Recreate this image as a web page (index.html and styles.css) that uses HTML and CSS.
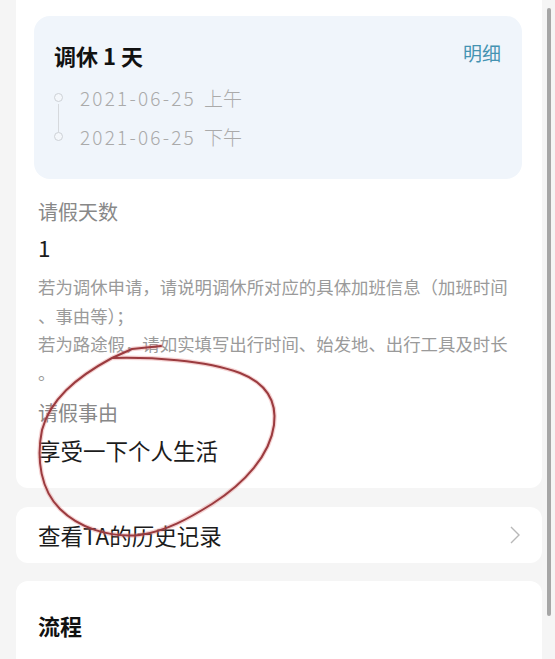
FILE: index.html
```html
<!DOCTYPE html>
<html>
<head>
  <meta charset="utf-8">
  <link rel="stylesheet" href="styles.css">
</head>
<body>
  <div class="card detail-card">
    <div class="leave-summary">
      <div class="summary-head">
        <h1>调休 1 天</h1>
        <a class="summary-link">明细</a>
      </div>
      <ul class="timeline">
        <li class="timeline-item"><span class="timeline-dot"></span><span class="timeline-date">2021-06-25</span>上午</li>
        <li class="timeline-item"><span class="timeline-dot"></span><span class="timeline-date">2021-06-25</span>下午</li>
      </ul>
    </div>

    <div class="field">
      <div class="field-label">请假天数</div>
      <div class="field-value">1</div>
      <p class="field-hint">若为调休申请，请说明调休所对应的具体加班信息（加班时间<br>、事由等）；<br>若为路途假，请如实填写出行时间、始发地、出行工具及时长<br>。</p>
    </div>

    <div class="field field-reason">
      <div class="field-label">请假事由</div>
      <div class="field-value">享受一下个人生活</div>
    </div>
  </div>

  <div class="card link-card">
    <span>查看TA的历史记录</span>
    <svg class="chevron" width="12" height="20" viewBox="0 0 12 20">
      <path d="M2 2 L10 10 L2 18" fill="none" stroke="#b8b8b8" stroke-width="1.4"/>
    </svg>
  </div>

  <div class="card flow-card">
    <h2>流程</h2>
  </div>

  <div class="scroll-thumb"></div>

  <!-- pen mark drawn over the reason field -->
  <svg class="pen-mark" width="555" height="659" viewBox="0 0 555 659">
    <g fill="none" stroke-linecap="round" stroke-linejoin="round">
      <path class="pen-glow" d="M161 346 L132 349 L112 358 C150 357 205 360 240 373 C268 384 277 402 274 425 C270 455 245 483 212 504 C188 519 166 531 140 535 C108 538 78 527 60 509 C41 490 36 460 42 430 C50 400 75 378 112 358"/>
      <path class="pen-line" d="M161 346 L132 349 L112 358 C150 357 205 360 240 373 C268 384 277 402 274 425 C270 455 245 483 212 504 C188 519 166 531 140 535 C108 538 78 527 60 509 C41 490 36 460 42 430 C50 400 75 378 112 358"/>
    </g>
  </svg>
</body>
</html>
```

FILE: styles.css
```css
body {
  margin: 0;
  padding: 0 13px 0 16px;
  background: #f5f5f5;
  font-family: "Noto Sans CJK SC", "Noto Sans", sans-serif;
  color: #222;
  overflow: hidden;
}
.card {
  background: #fff;
  border-radius: 12px;
}
.detail-card {
  border-radius: 0 0 12px 12px;
  padding: 16px 20px 23px 18px;
}
.leave-summary {
  background: #f0f5fb;
  border-radius: 16px;
  padding: 24px 21px 23px 20px;
}
.summary-head {
  display: flex;
  justify-content: space-between;
  align-items: flex-start;
}
.summary-head h1 {
  margin: 0;
  font-size: 22px;
  line-height: 30px;
  font-weight: bold;
  color: #111;
}
.summary-link {
  font-size: 19px;
  line-height: 26px;
  color: #4593b2;
}
.timeline {
  list-style: none;
  margin: 8px 0 0 0;
  padding: 0;
}
.timeline-item {
  display: flex;
  align-items: center;
  height: 39px;
  font-size: 19px;
  font-weight: 300;
  color: #aaa;
}
.timeline-date {
  margin: 0 8px 0 17px;
  letter-spacing: 2.2px;
}
.timeline-dot {
  position: relative;
  width: 7px;
  height: 7px;
  border: 1.5px solid #cdd1d6;
  border-radius: 50%;
  background: #f4f7fb;
}
.timeline-item:first-child .timeline-dot::after {
  content: "";
  position: absolute;
  left: 3px;
  top: 10px;
  width: 1px;
  height: 28px;
  background: #d6d9dd;
}
.field {
  padding-left: 4px;
}
.field-label {
  margin-top: 19px;
  font-size: 20px;
  line-height: 28px;
  color: #888;
}
.field-value {
  margin-top: 6px;
  font-size: 22.5px;
  line-height: 30px;
  color: #1c1c1c;
}
.field-hint {
  margin: 11px 0 0 0;
  font-size: 17.4px;
  line-height: 28.5px;
  color: #9a9a9a;
  white-space: nowrap;
}
.field-reason .field-label {
  margin-top: 12px;
}
.field-reason .field-value {
  margin-top: 8px;
}
.link-card {
  margin-top: 19px;
  height: 56px;
  padding: 0 21px 0 22px;
  display: flex;
  align-items: center;
  justify-content: space-between;
  font-size: 22.5px;
  color: #1c1c1c;
}
.chevron {
  display: block;
}
.flow-card {
  margin-top: 18px;
  height: 120px;
  padding: 29px 22px 0;
  border-radius: 12px 12px 0 0;
}
.flow-card h2 {
  margin: 0;
  font-size: 22px;
  line-height: 30px;
  font-weight: bold;
  color: #111;
}
.scroll-thumb {
  position: fixed;
  top: 8px;
  right: 4px;
  width: 4px;
  height: 608px;
  border-radius: 2px;
  background: #a6a6a6;
}
.pen-mark {
  position: absolute;
  top: 0;
  left: 0;
  pointer-events: none;
}
.pen-glow {
  stroke: rgba(225, 130, 130, 0.35);
  stroke-width: 4.5;
}
.pen-line {
  stroke: #9b3b3f;
  stroke-width: 2;
}
```
